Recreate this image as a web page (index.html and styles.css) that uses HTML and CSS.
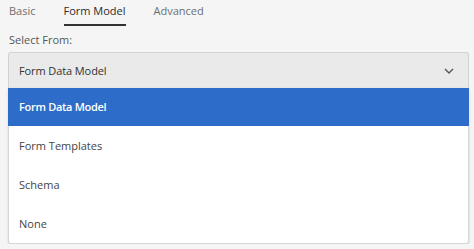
FILE: index.html
```html
<!DOCTYPE html>
<html>
<head>
<meta charset="utf-8">
<link rel="stylesheet" href="styles.css">
</head>
<body>
<div class="panel">
  <div class="tabs">
    <span class="tab">Basic</span>
    <span class="tab active">Form Model</span>
    <span class="tab">Advanced</span>
  </div>
  <div class="label">Select From:</div>
  <div class="picker">
    <div class="field">
      <span>Form Data Model</span>
      <svg class="chev" width="10" height="6" viewBox="0 0 10 6"><path d="M1 1 L5 5 L9 1" fill="none" stroke="#555" stroke-width="1.4"/></svg>
    </div>
    <ul class="menu">
      <li class="item selected">Form Data Model</li>
      <li class="item">Form Templates</li>
      <li class="item">Schema</li>
      <li class="item">None</li>
    </ul>
  </div>
</div>
</body>
</html>
```
FILE: styles.css
```css
html, body {
  margin: 0;
  padding: 0;
  background: #f5f5f5;
}
body {
  font-family: "Open Sans", "Noto Sans", sans-serif;
  font-size: 11px;
  color: #4b4b4b;
}
.panel {
  padding: 0 5px 0 8px;
}
.tabs {
  display: flex;
  gap: 28px;
  padding-left: 1px;
  height: 27px;
}
.tab {
  position: relative;
  line-height: 22px;
  color: #6e6e6e;
}
.tab.active {
  color: #2c2c2c;
}
.tab.active::after {
  content: "";
  position: absolute;
  left: 0;
  right: 0;
  top: 24px;
  height: 2px;
  background: #323232;
}
.label {
  padding-left: 1px;
  line-height: 26px;
  color: #555;
}
.picker {
  margin-top: -1px;
}
.field {
  height: 35px;
  display: flex;
  align-items: center;
  justify-content: space-between;
  padding: 0 14px 0 10px;
  background: #eaeaea;
  border: 1px solid #d2d2d2;
  border-bottom: none;
  border-radius: 3px 3px 0 0;
  color: #333;
  letter-spacing: -0.1px;
}
.chev {
  display: block;
}
.menu {
  list-style: none;
  margin: 0;
  padding: 0;
  background: #fff;
  border: 1px solid #d6d6d6;
  border-top: none;
  border-radius: 0 0 3px 3px;
  box-shadow: 0 1px 3px rgba(0,0,0,0.12);
}
.item {
  height: 39px;
  line-height: 39px;
  padding-left: 10px;
  color: #444;
}
.item.selected {
  height: 38px;
  line-height: 38px;
  background: #2d6cc8;
  color: #fff;
  font-weight: 600;
  letter-spacing: -0.3px;
  margin: 0 -1px;
  padding-left: 11px;
}
```
